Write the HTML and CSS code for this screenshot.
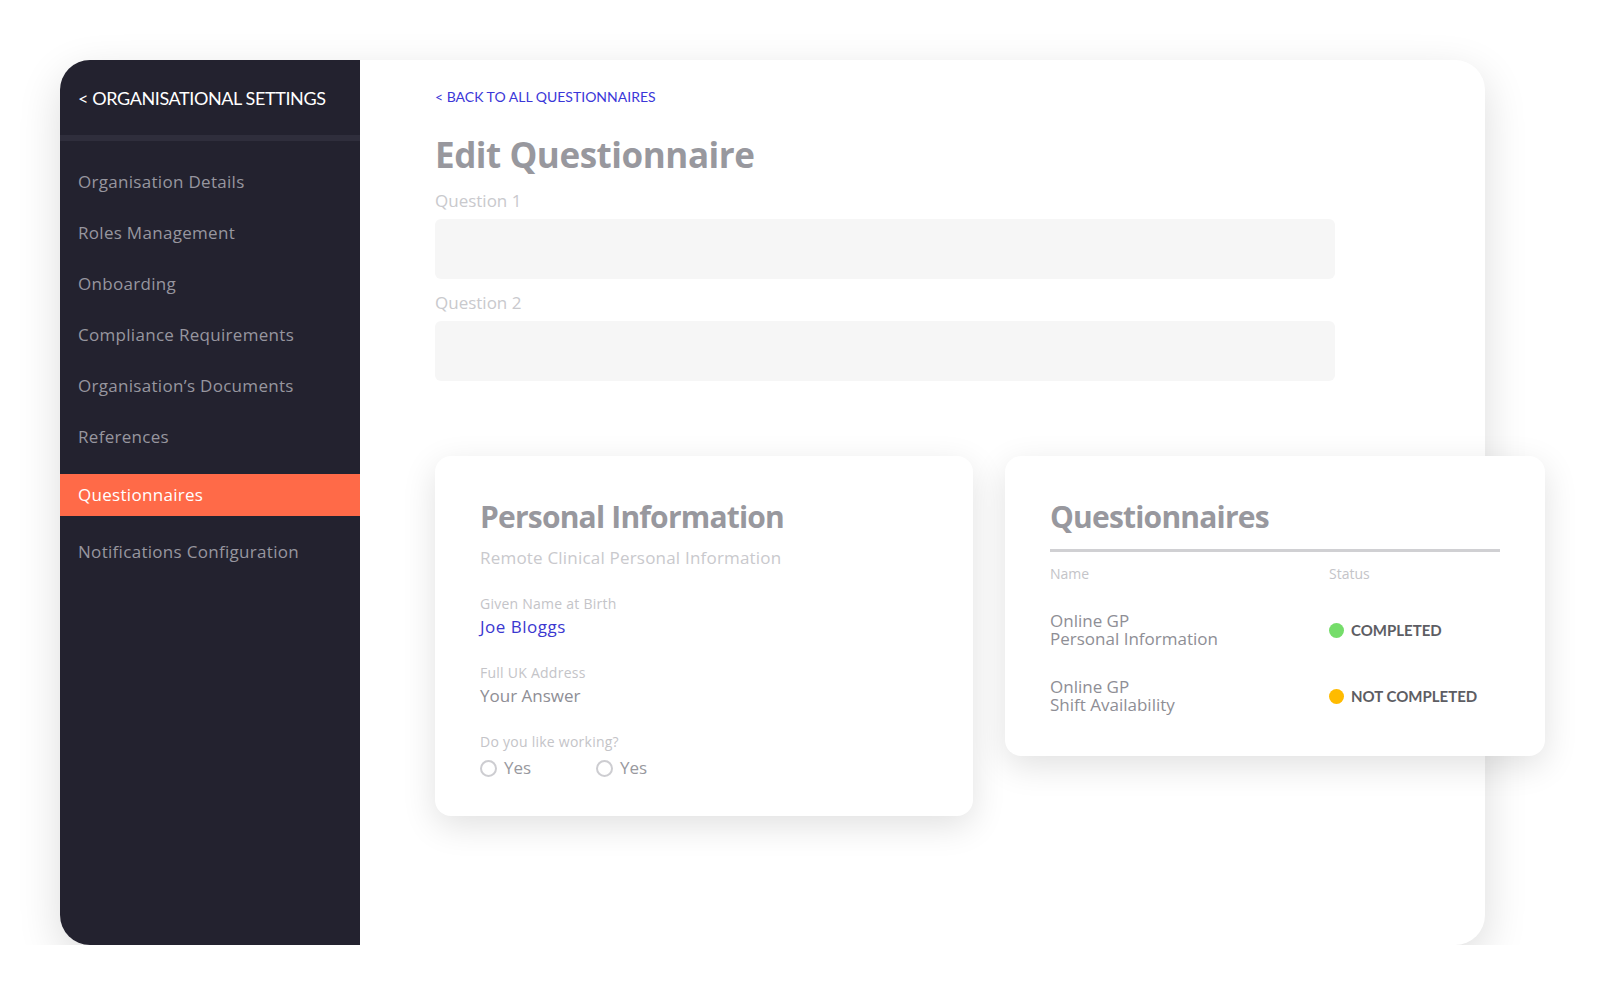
FILE: index.html
```html
<!DOCTYPE html>
<html lang="en">
<head>
  <meta charset="UTF-8">
  <meta name="viewport" content="width=device-width, initial-scale=1.0">
  <title>Edit Questionnaire - Organisational Settings</title>
  <link rel="stylesheet" href="styles.css">
</head>
<body>
  <div class="frame">
    <aside class="sidebar">
      <div class="sidebar-head">&lt; ORGANISATIONAL SETTINGS</div>
      <nav class="nav">
        <a href="#" class="nav-item">Organisation Details</a>
        <a href="#" class="nav-item">Roles Management</a>
        <a href="#" class="nav-item">Onboarding</a>
        <a href="#" class="nav-item">Compliance Requirements</a>
        <a href="#" class="nav-item">Organisation’s Documents</a>
        <a href="#" class="nav-item">References</a>
        <a href="#" class="nav-item active">Questionnaires</a>
        <a href="#" class="nav-item">Notifications Configuration</a>
      </nav>
    </aside>

    <main class="main">
      <a href="#" class="back-link">&lt; BACK TO ALL QUESTIONNAIRES</a>
      <h1>Edit Questionnaire</h1>

      <label class="q-label">Question 1</label>
      <div class="q-input"></div>
      <label class="q-label">Question 2</label>
      <div class="q-input"></div>

      <div class="cards">
        <section class="card card-person">
          <h2>Personal Information</h2>
          <p class="subtitle">Remote Clinical Personal Information</p>

          <div class="field">
            <div class="field-label">Given Name at Birth</div>
            <div class="field-value filled">Joe Bloggs</div>
          </div>
          <div class="field">
            <div class="field-label">Full UK Address</div>
            <div class="field-value">Your Answer</div>
          </div>
          <div class="field">
            <div class="field-label">Do you like working?</div>
            <div class="radios">
              <span class="radio"><i class="circle"></i>Yes</span>
              <span class="radio"><i class="circle"></i>Yes</span>
            </div>
          </div>
        </section>

        <section class="card card-list">
          <h2>Questionnaires</h2>
          <div class="rule"></div>
          <div class="table">
            <div class="th">Name</div>
            <div class="th">Status</div>

            <div class="td-name">
              <span>Online GP</span>
              <span>Personal Information</span>
            </div>
            <div class="td-status"><i class="dot green"></i>COMPLETED</div>

            <div class="td-name">
              <span>Online GP</span>
              <span>Shift Availability</span>
            </div>
            <div class="td-status"><i class="dot amber"></i>NOT COMPLETED</div>
          </div>
        </section>
      </div>
    </main>
  </div>
</body>
</html>
```

FILE: styles.css
```css
* { margin: 0; padding: 0; box-sizing: border-box; }
body {
  font-family: 'Open Sans', 'Liberation Sans', sans-serif;
  background: #fff;
  color: #98989e;
}
a { text-decoration: none; }

.frame {
  margin: 60px 0 0 60px;
  width: 1425px;
  height: 885px;
  display: flex;
  background: #fff;
  border-radius: 30px;
  box-shadow: 0 14px 44px rgba(0, 0, 0, 0.14);
}

/* sidebar */
.sidebar {
  width: 300px;
  flex-shrink: 0;
  background: #23222f;
  border-radius: 30px 0 0 30px;
}
.sidebar-head {
  height: 81px;
  padding: 28px 0 0 18px;
  border-bottom: 6px solid #2f2e3c;
  color: #fff;
  font-family: 'Lato', sans-serif;
  font-size: 18px;
  letter-spacing: -0.4px;
  line-height: 20px;
}
.nav {
  display: flex;
  flex-direction: column;
  gap: 9px;
  padding-top: 20px;
}
.nav-item {
  display: block;
  height: 42px;
  line-height: 42px;
  padding-left: 18px;
  color: #97969f;
  font-size: 17px;
  font-weight: 500;
  letter-spacing: 0.3px;
}
.nav-item.active {
  background: #ff6a48;
  color: #fff;
  margin: 7px 0 6px;
}

/* main */
.main {
  flex: 1;
  padding: 27px 0 0 75px;
}
.back-link {
  display: block;
  color: #3b37d8;
  font-family: 'Lato', sans-serif;
  font-size: 14px;
  line-height: 20px;
}
h1 {
  margin-top: 27px;
  font-size: 35px;
  line-height: 42px;
  font-weight: 700;
  letter-spacing: -0.45px;
  color: #98989e;
}
.q-label {
  display: block;
  margin-top: 15px;
  font-size: 17px;
  line-height: 20px;
  color: #c9c9cd;
}
.q-input + .q-label { margin-top: 14px; }
.q-input {
  width: 900px;
  height: 60px;
  margin-top: 8px;
  background: #f6f6f6;
  border-radius: 6px;
}

/* cards */
.cards {
  display: flex;
  align-items: flex-start;
  gap: 32px;
  margin-top: 75px;
}
.card {
  background: #fff;
  border-radius: 16px;
  padding: 43px 45px 0;
  box-shadow: 0 10px 34px rgba(0, 0, 0, 0.12);
}
.card-person { width: 538px; height: 360px; }
.card-list { width: 540px; height: 300px; }
.card h2 {
  font-size: 30px;
  line-height: 36px;
  font-weight: 700;
  letter-spacing: -0.8px;
  color: #98989e;
}
.subtitle {
  margin-top: 13px;
  font-size: 17px;
  line-height: 20px;
  letter-spacing: 0.2px;
  color: #c9c9cd;
}
.field { margin-top: 27px; }
.field-label {
  font-size: 14px;
  line-height: 18px;
  letter-spacing: 0.25px;
  color: #c4c4c8;
}
.field-value {
  margin-top: 4px;
  font-size: 17px;
  line-height: 20px;
  font-weight: 500;
  color: #8e8e95;
}
.field-value.filled { color: #3b37d0; letter-spacing: 0.5px; }
.radios {
  display: flex;
  margin-top: 7px;
  font-size: 17px;
  line-height: 20px;
  font-weight: 500;
  color: #98989e;
}
.radio {
  display: flex;
  align-items: center;
  gap: 7px;
  width: 116px;
}
.circle {
  width: 17px;
  height: 17px;
  border: 2px solid #cdcdd1;
  border-radius: 50%;
}

.rule {
  height: 3px;
  margin-top: 14px;
  background: #d0d0d3;
}
.table {
  display: grid;
  grid-template-columns: 279px 1fr;
  row-gap: 30px;
  margin-top: 13px;
}
.th {
  font-size: 14px;
  line-height: 18px;
  color: #c4c4c8;
  margin-bottom: -1px;
}
.td-name {
  display: flex;
  flex-direction: column;
  font-size: 17px;
  line-height: 18px;
  color: #8e8e95;
}
.td-status {
  display: flex;
  align-items: center;
  gap: 7px;
  font-family: 'Lato', sans-serif;
  font-size: 15px;
  font-weight: 700;
  color: #5d5d63;
}
.dot {
  width: 15px;
  height: 15px;
  border-radius: 50%;
}
.dot.green { background: #75dd6a; }
.dot.amber { background: #ffbb00; }
```
